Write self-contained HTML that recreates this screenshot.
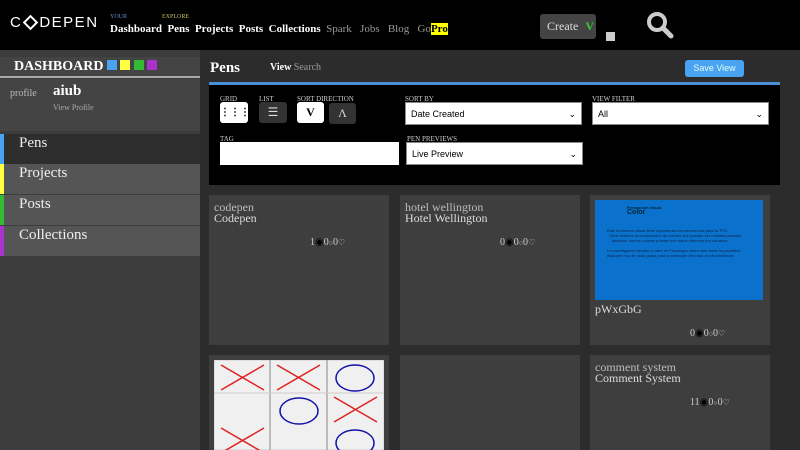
<!DOCTYPE html>
<html><head><style>
*{margin:0;padding:0;box-sizing:border-box}
body{width:800px;height:450px;overflow:hidden;background:#2c2c2c;font-family:"Liberation Serif",serif;color:#fff;position:relative}
.a{position:absolute}
.hdr{left:0;top:0;width:800px;height:50px;background:#000}
.lbl{font-size:6px;font-family:"Liberation Serif",serif}
.nav{font-size:11px;font-weight:bold;color:#fff;white-space:nowrap}
.g{color:#999;font-weight:normal}
.side{left:0;top:50px;width:200px;height:400px;background:#3c3c3c}
.item{left:0;width:200px;height:30px;font-size:15px;padding:0 0 0 15px;line-height:18px;color:#eee}
.card{background:#3e3e3e;width:180px;height:150px}
.ct{font-size:12px;color:#ddd}
.sel{background:#fff;color:#000;font-family:"Liberation Sans",sans-serif;font-size:9px;padding:0 5px;line-height:22px;height:23px;border:1px solid #888}
.bt{border-radius:3px;height:21px;font-size:12px;text-align:center;line-height:21px;font-weight:bold}
.sm{font-size:7px;color:#ccc}
</style></head><body>
<div class="a hdr"></div>
<div class="a" style="left:10px;top:14px;font-family:'Liberation Sans',sans-serif;font-size:15px;letter-spacing:1.5px;color:#fff;white-space:nowrap">C<span style="display:inline-block;width:11px;height:11px;border:2px solid #fff;transform:rotate(45deg);margin:0 3px -1px 3px"></span>DEPEN</div>
<div class="a lbl" style="left:110px;top:14px;color:#6a8cd8">YOUR</div>
<div class="a lbl" style="left:162px;top:14px;color:#c8c060">EXPLORE</div>
<div class="a nav" style="left:110px;top:23px">Dashboard&nbsp; Pens&nbsp; Projects&nbsp; Posts&nbsp; Collections&nbsp; <span class="g">Spark&nbsp;&nbsp; Jobs&nbsp;&nbsp; Blog&nbsp;&nbsp; Go</span><span style="background:#ff0;color:#000">Pro</span></div>
<div class="a" style="left:540px;top:14px;width:56px;height:25px;background:#444;border-radius:3px;font-size:12px;line-height:25px;padding-left:7px;color:#ddd">Create <b style="color:#3c3;margin-left:4px">V</b></div>
<div class="a" style="left:606px;top:32px;width:9px;height:9px;background:#ccc"></div>
<svg class="a" style="left:645px;top:10px" width="30" height="30"><circle cx="12" cy="12" r="8" fill="none" stroke="#ccc" stroke-width="4"/><line x1="18" y1="18" x2="26" y2="26" stroke="#ccc" stroke-width="5" stroke-linecap="round"/></svg>

<div class="a side"></div>
<div class="a" style="left:0;top:57px;width:200px;height:21px;background:#444;border-bottom:2px solid #aaa"></div>
<div class="a" style="left:14px;top:59px;font-size:14px;font-weight:bold;white-space:nowrap">DASHBOARD <span style="display:inline-block;width:10px;height:10px;background:#4aa3f0"></span> <span style="display:inline-block;width:10px;height:10px;background:#ff4"></span> <span style="display:inline-block;width:10px;height:10px;background:#3b3"></span> <span style="display:inline-block;width:10px;height:10px;background:#a3c"></span></div>
<div class="a" style="left:0;top:79px;width:200px;height:52px;background:#444"></div>
<div class="a" style="left:10px;top:88px;font-size:10px;color:#bbb">profile</div>
<div class="a" style="left:53px;top:83px;font-size:15px;font-weight:bold">aiub</div>
<div class="a" style="left:53px;top:103px;font-size:8px;color:#aaa">View Profile</div>
<div class="a item" style="top:134px;background:#2e2e2e;border-left:4px solid #4aa3f0">Pens</div>
<div class="a item" style="top:164px;background:#555;border-left:4px solid #ff4;height:30px">Projects</div>
<div class="a item" style="top:195px;background:#555;border-left:4px solid #3b3">Posts</div>
<div class="a item" style="top:226px;background:#555;border-left:4px solid #a3c">Collections</div>

<div class="a" style="left:210px;top:60px;font-size:15px;font-weight:bold">Pens</div>
<div class="a" style="left:270px;top:62px;font-size:10px"><b>View</b> <span style="color:#999">Search</span></div>
<div class="a" style="left:685px;top:60px;width:59px;height:17px;background:#4aa3f0;border-radius:3px;font-family:'Liberation Sans',sans-serif;font-size:9px;line-height:17px;text-align:center;color:#dff">Save View</div>
<div class="a" style="left:209px;top:82px;width:571px;height:3px;background:#4a90d9"></div>
<div class="a" style="left:209px;top:85px;width:571px;height:100px;background:#000"></div>
<div class="a sm" style="left:220px;top:95px">GRID</div>
<div class="a sm" style="left:259px;top:95px">LIST</div>
<div class="a sm" style="left:297px;top:95px">SORT DIRECTION</div>
<div class="a sm" style="left:405px;top:95px">SORT BY</div>
<div class="a sm" style="left:592px;top:95px">VIEW FILTER</div>
<div class="a bt" style="left:220px;top:102px;width:28px;background:#fff;color:#000;font-size:10px">&#8942;&#8942;&#8942;</div>
<div class="a bt" style="left:259px;top:102px;width:28px;background:#333;color:#ddd;font-weight:normal">&#9776;</div>
<div class="a bt" style="left:297px;top:102px;width:27px;background:#fff;color:#000">V</div>
<div class="a bt" style="left:329px;top:103px;width:27px;background:#333;color:#ddd;font-weight:normal">&#923;</div>
<div class="a sel" style="left:405px;top:102px;width:177px">Date Created<span style="float:right">&#8964;</span></div>
<div class="a sel" style="left:592px;top:102px;width:177px">All<span style="float:right">&#8964;</span></div>
<div class="a sm" style="left:220px;top:135px">TAG</div>
<div class="a sm" style="left:407px;top:135px">PEN PREVIEWS</div>
<div class="a" style="left:220px;top:142px;width:179px;height:23px;background:#fff"></div>
<div class="a sel" style="left:406px;top:142px;width:177px">Live Preview<span style="float:right">&#8964;</span></div>

<div class="a card" style="left:209px;top:195px"></div>
<div class="a card" style="left:400px;top:195px"></div>
<div class="a card" style="left:590px;top:195px"></div>
<div class="a card" style="left:209px;top:355px;height:95px"></div>
<div class="a card" style="left:400px;top:355px;height:95px"></div>
<div class="a card" style="left:590px;top:355px;height:95px"></div>

<div class="a ct" style="left:214px;top:200px;color:#bbb">codepen</div>
<div class="a ct" style="left:214px;top:211px">Codepen</div>
<div class="a ct" style="left:310px;top:237px;font-size:10px;color:#ccc">1<span style="color:#000">&#9673;</span>0<span style="font-size:7px">&#9675;</span>0<span style="font-size:8px">&#9825;</span></div>
<div class="a ct" style="left:405px;top:200px;color:#bbb">hotel wellington</div>
<div class="a ct" style="left:405px;top:211px">Hotel Wellington</div>
<div class="a ct" style="left:500px;top:237px;font-size:10px;color:#ccc">0<span style="color:#000">&#9673;</span>0<span style="font-size:7px">&#9675;</span>0<span style="font-size:8px">&#9825;</span></div>
<div class="a" style="left:595px;top:200px;width:168px;height:100px;background:#0a72cc;font-family:'Liberation Sans',sans-serif;color:#023">
<div style="position:absolute;left:32px;top:5px;font-size:4px;font-weight:bold">Percepcion visual</div>
<div style="position:absolute;left:32px;top:9px;font-size:7px;font-weight:bold">Color</div>
<div style="position:absolute;left:12px;top:28px;width:150px;font-size:4px;line-height:5px;color:#124">Este fenómeno visual tiene importantes consecuencias para la TPO.<br>&nbsp;&nbsp;Debe evitarse la combinación de colores que puedan ser malinterpretados.<br>&nbsp;&nbsp;&nbsp;&nbsp;Atención: ciertos colores pueden ser vistos diferente por usuarios.<br><br>La investigación llevada a cabo en Psicología sobre este tema ha permitido disponer hoy de unas guías para la selección del color en las interfaces</div></div>
<div class="a ct" style="left:595px;top:302px">pWxGbG</div>
<div class="a ct" style="left:690px;top:328px;font-size:10px;color:#ccc">0<span style="color:#000">&#9673;</span>0<span style="font-size:7px">&#9675;</span>0<span style="font-size:8px">&#9825;</span></div>
<div class="a ct" style="left:595px;top:360px;color:#bbb">comment system</div>
<div class="a ct" style="left:595px;top:371px">Comment System</div>
<div class="a ct" style="left:690px;top:397px;font-size:10px;color:#ccc">11<span style="color:#000">&#9673;</span>0<span style="font-size:7px">&#9675;</span>0<span style="font-size:8px">&#9825;</span></div>

<svg class="a" style="left:214px;top:360px" width="170" height="90"><rect width="170" height="90" fill="#f0f0f0" stroke="#ccc"/>
<line x1="56" y1="0" x2="56" y2="90" stroke="#888"/><line x1="113" y1="0" x2="113" y2="90" stroke="#888"/><line x1="0" y1="33" x2="170" y2="33" stroke="#ccc"/>
<g stroke="#d22" stroke-width="1.5"><line x1="7" y1="5" x2="50" y2="30"/><line x1="50" y1="5" x2="7" y2="30"/><line x1="63" y1="5" x2="106" y2="30"/><line x1="106" y1="5" x2="63" y2="30"/><line x1="120" y1="37" x2="163" y2="62"/><line x1="163" y1="37" x2="120" y2="62"/><line x1="7" y1="68" x2="50" y2="93"/><line x1="50" y1="68" x2="7" y2="93"/></g>
<g fill="none" stroke="#11a" stroke-width="1.5"><ellipse cx="141" cy="18" rx="19" ry="13"/><ellipse cx="85" cy="51" rx="19" ry="13"/><ellipse cx="141" cy="83" rx="19" ry="13"/></g></svg>
</body></html>
